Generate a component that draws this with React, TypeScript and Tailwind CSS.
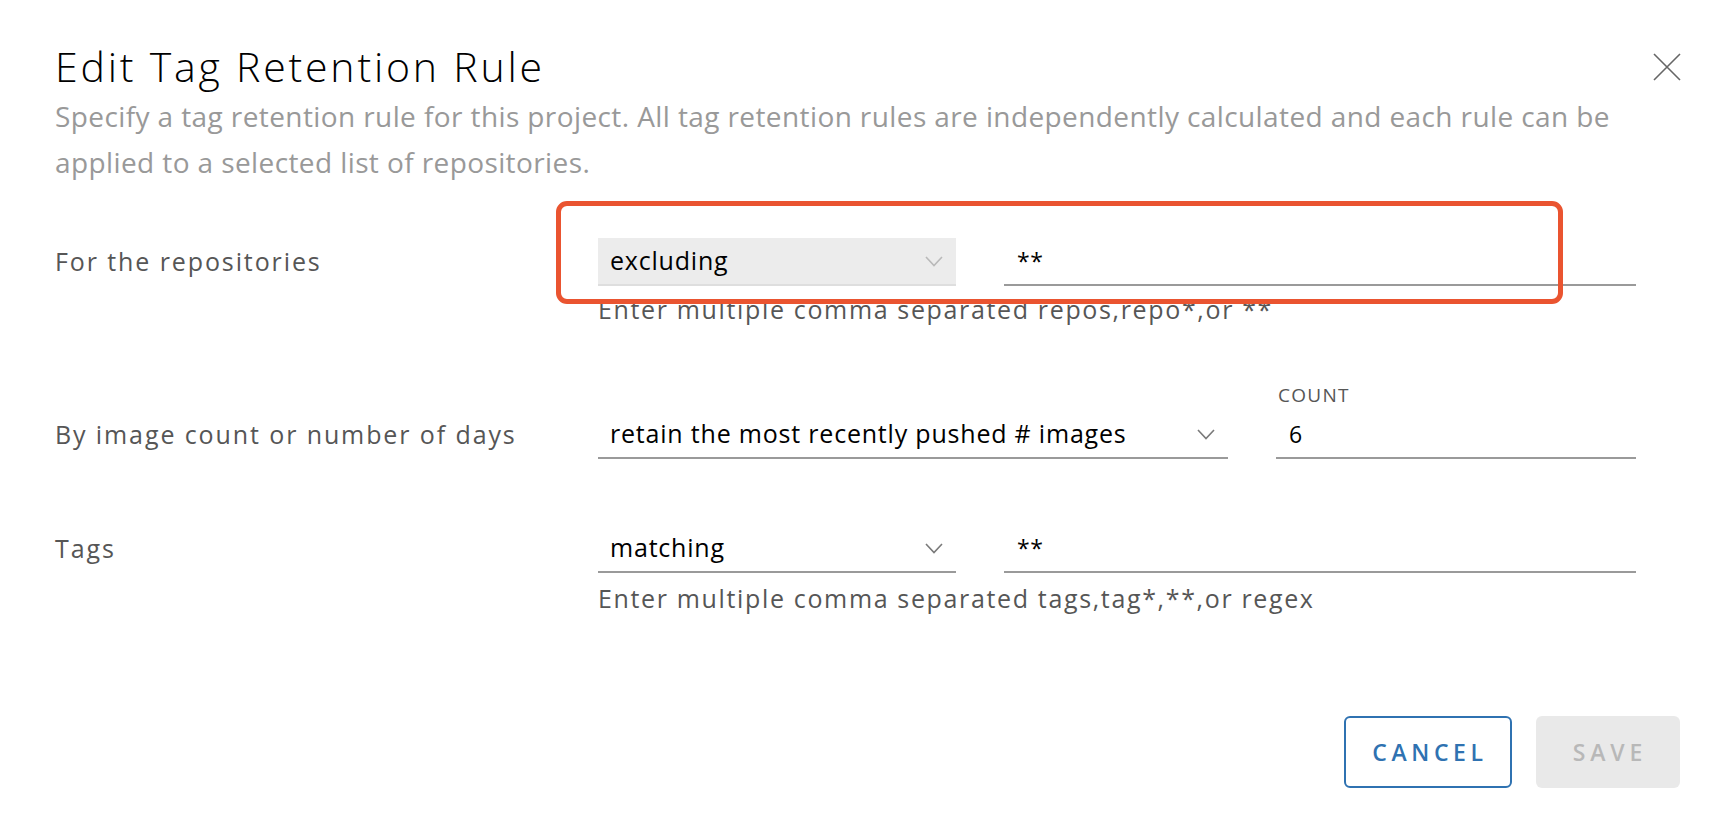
const font = { fontFamily: "'Open Sans', Lato, sans-serif" };

const Chevron = ({ light }: { light?: boolean }) => (
    <svg width="18" height="11" viewBox="0 0 18 11" fill="none" className="shrink-0">
        <path d="M1 1l8 8.5L17 1" stroke={light ? "#b9b9b9" : "#7a7a7a"} strokeWidth="1.6" />
    </svg>
);

const Select = ({ value, width, filled }: { value: string; width: string; filled?: boolean }) => (
    <div
        className={`${width} h-[48px] flex items-center justify-between pl-[12px] pr-[13px] border-b-2 ${
            filled ? "bg-[#ececec] border-[#dedede]" : "border-[#9a9a9a]"
        }`}
    >
        <span className="text-[25px] tracking-[0.8px] text-black">{value}</span>
        <Chevron light={filled} />
    </div>
);

const TextInput = ({ value, width }: { value: string; width: string }) => (
    <div className={`${width} h-[48px] flex items-center px-[13px] border-b-2 border-[#9a9a9a]`}>
        <span className="text-[23px] tracking-[0.5px] text-black">{value}</span>
    </div>
);

const Label = ({ children }: { children: string }) => (
    <div className="w-[543px] h-[48px] flex items-center text-[25px] tracking-[1.9px] text-[#565656] shrink-0">
        {children}
    </div>
);

const Helper = ({ children, tight }: { children: string; tight?: boolean }) => (
    <p className={`${tight ? "mt-[7px]" : "mt-[9px]"} text-[25px] leading-[32px] tracking-[1.65px] text-[#565656]`}>
        {children}
    </p>
);

export default function App() {
    return (
        <div className="min-h-screen w-full bg-white pl-[55px] pr-[38px]" style={font}>
            {/* Header */}
            <div className="flex items-start justify-between pt-[42px]">
                <h1 className="text-[41px] leading-[48px] font-light tracking-[2.8px] text-black">Edit Tag Retention Rule</h1>
                <svg width="28" height="28" viewBox="0 0 28 28" className="mt-[11px] -mr-[1px]">
                    <path d="M1 1L27 27M27 1L1 27" stroke="#666" strokeWidth="1.6" />
                </svg>
            </div>
            <p className="mt-[3px] text-[28px] leading-[46px] tracking-[0.4px] text-[#999]">
                Specify a tag retention rule for this project. All tag retention rules are independently calculated and each rule can be
                <br />
                applied to a selected list of repositories.
            </p>

            {/* Repositories */}
            <div className="flex items-start mt-[53px]">
                <Label>For the repositories</Label>
                <div className="relative">
                    <div className="flex gap-[48px]">
                        <Select value="excluding" width="w-[358px]" filled />
                        <TextInput value="**" width="w-[632px]" />
                    </div>
                    <Helper tight>Enter multiple comma separated repos,repo*,or **</Helper>
                    {/* highlight annotation */}
                    <div className="absolute left-[-42px] top-[-37px] w-[1007px] h-[103px] rounded-[11px] border-[5px] border-[#ea5430]" />
                </div>
            </div>

            {/* Count */}
            <div className="flex items-end mt-[58px]">
                <Label>By image count or number of days</Label>
                <div className="flex items-end gap-[48px]">
                    <Select value="retain the most recently pushed # images" width="w-[630px]" />
                    <div className="flex flex-col">
                        <span className="text-[19px] leading-[24px] tracking-[1.3px] text-[#565656] pl-[2px] mb-[4px]">COUNT</span>
                        <TextInput value="6" width="w-[360px]" />
                    </div>
                </div>
            </div>

            {/* Tags */}
            <div className="flex items-start mt-[66px]">
                <Label>Tags</Label>
                <div>
                    <div className="flex gap-[48px]">
                        <Select value="matching" width="w-[358px]" />
                        <TextInput value="**" width="w-[632px]" />
                    </div>
                    <Helper>Enter multiple comma separated tags,tag*,**,or regex</Helper>
                </div>
            </div>

            {/* Footer */}
            <div className="flex justify-end gap-[24px] mt-[102px]">
                <button className="w-[168px] h-[72px] rounded-[6px] border-2 border-[#2f72b1] text-[#2f72b1] text-[23px] font-semibold tracking-[0.2em] pl-[4px]">
                    CANCEL
                </button>
                <button className="w-[144px] h-[72px] rounded-[6px] bg-[#e9e9e9] text-[#b8b8b8] text-[23px] font-semibold tracking-[0.21em] pl-[4px]">
                    SAVE
                </button>
            </div>
        </div>
    );
}
